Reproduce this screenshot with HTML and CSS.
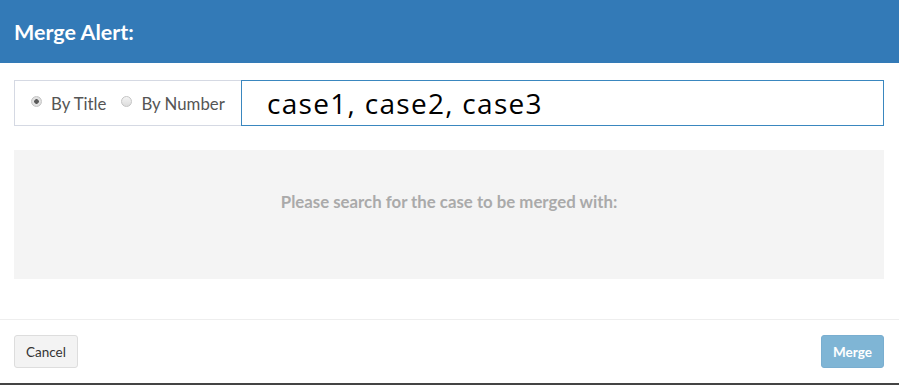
FILE: index.html
```html
<!DOCTYPE html>
<html lang="en">
<head>
    <meta charset="UTF-8">
    <title>Merge Alert</title>
    <link rel="stylesheet" href="styles.css">
</head>
<body>
    <div class="modal">
        <div class="modal-header">
            <h4 class="modal-title">Merge Alert:</h4>
        </div>
        <div class="modal-body">
            <div class="search-row">
                <div class="search-type">
                    <label class="radio"><input type="radio" name="type" checked> By Title</label>
                    <label class="radio"><input type="radio" name="type"> By Number</label>
                </div>
                <input type="text" class="search-input" value="case1, case2, case3">
            </div>
            <div class="results">
                Please search for the case to be merged with:
            </div>
        </div>
        <div class="modal-footer">
            <button class="btn btn-default">Cancel</button>
            <button class="btn btn-primary" disabled>Merge</button>
        </div>
    </div>
</body>
</html>
```
FILE: styles.css
```css
* {
    margin: 0;
    padding: 0;
    box-sizing: border-box;
}

body {
    background-color: #fff;
    font-family: Lato, "Open Sans", sans-serif;
    color: #555;
}

.modal {
    width: 899px;
    height: 385px;
    border-bottom: 2px solid #444;
    display: flex;
    flex-direction: column;
}

.modal-header {
    height: 63px;
    background-color: #337ab7;
    padding: 0 14px;
    display: flex;
    align-items: center;
}

.modal-title {
    color: #fff;
    font-size: 21.5px;
    font-weight: 700;
    padding-top: 1px;
}

.modal-body {
    padding: 17px 15px 40px 14px;
    border-bottom: 1px solid #eee;
}

.search-row {
    display: flex;
    height: 46px;
}

.search-type {
    width: 227px;
    border: 1px solid #d5d9e3;
    border-right: none;
    display: flex;
    align-items: center;
    padding-left: 16px;
    gap: 15px;
}

.radio {
    display: flex;
    align-items: center;
    font-size: 16.8px;
    color: #555;
    gap: 9px;
}

.radio input {
    appearance: none;
    width: 11px;
    height: 11px;
    margin-top: -3px;
    border: 1px solid #c4c4c4;
    border-radius: 50%;
    background: linear-gradient(#f4f4f4, #dcdcdc);
}

.radio input:checked {
    background: radial-gradient(circle, #5a5a5a 0, #5a5a5a 2px, #e4e4e4 2.6px, #d8d8d8 100%);
}

.search-input {
    flex: 1;
    border: 1px solid #3a87bf;
    padding: 0 25px;
    font-family: "Open Sans", sans-serif;
    font-size: 28px;
    letter-spacing: 1.3px;
    color: #000;
    outline: none;
}

.results {
    margin-top: 24px;
    height: 129px;
    background-color: #f4f4f4;
    display: flex;
    justify-content: center;
    align-items: flex-start;
    padding-top: 41px;
    color: #aaa;
    font-size: 16.8px;
    font-weight: 700;
}

.modal-footer {
    padding: 15px 15px 0 14px;
    display: flex;
    justify-content: space-between;
}

.btn {
    height: 33px;
    padding: 0 11px;
    font-family: Lato, "Open Sans", sans-serif;
    font-size: 13.5px;
    border-radius: 3px;
    border: 1px solid #ddd;
}

.btn-default {
    background-color: #f3f3f3;
    color: #333;
}

.btn-primary {
    background-color: #7fb5d5;
    border-color: #79aed0;
    color: #fff;
    font-weight: 700;
}
```
